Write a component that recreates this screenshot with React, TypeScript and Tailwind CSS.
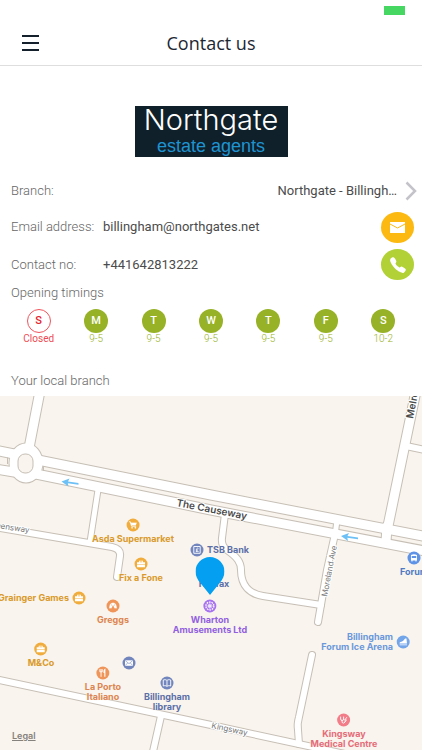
import type { ReactNode } from "react"
import { IoCall } from "react-icons/io5"

const MAP_WIDTH = 422
const MAP_HEIGHT = 354

const openingTimes = [
  { day: "S", hours: "Closed" },
  { day: "M", hours: "9-5" },
  { day: "T", hours: "9-5" },
  { day: "W", hours: "9-5" },
  { day: "T", hours: "9-5" },
  { day: "F", hours: "9-5" },
  { day: "S", hours: "10-2" },
]

const roads = [
  { d: "M40 -5 L29 52", width: 9 },
  { d: "M-5 54 L14 58", width: 9 },
  { d: "M-5 73 L14 76", width: 9 },
  { d: "M38 64 L211 99 L430 141.500", width: 9 },
  { d: "M36 78 L211 114 L430 156", width: 9 },
  { d: "M416 -5 L388 130", width: 9 },
  { d: "M387 130 L386 146", width: 9 },
  { d: "M337 124 L335 140", width: 5 },
  { d: "M406 50 L430 55", width: 6 },
  { d: "M335 138 L327 174 L318 226", width: 6 },
  { d: "M225 118 L222 142 Q221 150 227 154 C237 161 241 166 241 174 C241 190 250 198 263 200 L321 209", width: 6 },
  { d: "M312 259 L299 321 Q297 328 298 334 L299 348", width: 6 },
  { d: "M-5 283 L211 329 L345 358", width: 6 },
  { d: "M161 320 L152 360", width: 6 },
  { d: "M-5 131 L30 137 L112 151 Q121 153 120 160 L117 181", width: 6 },
  { d: "M98 94 L90 146", width: 5 },
]

type IconName = "cart" | "bag" | "bread" | "fork" | "mail" | "book" | "bank" | "wheel" | "skate" | "bus" | "medical"

const glyphs: Record<IconName, ReactNode> = {
  cart: (
    <g fill="white" stroke="white">
      <path d="M2.800 3.800h1.500l1.200 4.400h4.600" fill="none" strokeWidth=".9" />
      <path d="M4.600 4.800h6l-.9 2.400H5.200z" strokeWidth=".2" />
      <circle cx="6" cy="9.800" r=".7" strokeWidth=".2" />
      <circle cx="9.300" cy="9.800" r=".7" strokeWidth=".2" />
    </g>
  ),
  bag: <path d="M3 5.200h2V3.800h4v1.400h2v2.300H3zM5.800 5.200h2.400v-.7H5.800zM3 8h8v2.200H3z" fill="white" fillRule="evenodd" />,
  bread: <path d="M3 9.500c0-4 1.500-6 4-6s4 2 4 6H8.500L7 6.500l-1.500 3zM5 4.500l.8 2.500M9 4.500l-.8 2.500" fill="white" stroke="#f0955a" strokeWidth=".4" />,
  fork: (
    <g fill="none" stroke="white">
      <path d="M4 3.200v2.600h2.400V3.200M5.200 3v7.800" strokeWidth=".9" />
      <path d="M9 10.800V3.500C8 4.200 8 6 8.200 7" strokeWidth="1.100" />
    </g>
  ),
  mail: (
    <g>
      <path d="M3 4.300h8v5.500H3z" fill="white" />
      <path d="M3.200 4.500L7 7.700l3.800-3.200M3.200 9.600l2.500-2.700M10.800 9.600L8.300 6.900" fill="none" stroke="#7286bd" strokeWidth=".6" />
    </g>
  ),
  book: <path d="M7 4.500C6 3.500 4.500 3.500 3.300 4v6C4.500 9.500 6 9.500 7 10.400c1-.9 2.500-.9 3.700-.4V4C9.500 3.500 8 3.500 7 4.500v5.900" fill="none" stroke="white" strokeWidth=".9" />,
  bank: (
    <g fill="none" stroke="white" strokeWidth=".9">
      <path d="M3.800 3.500h6.400v6.800H3.800z" />
      <path d="M8.500 5.700c-.6-1-2-.6-1.800.6v1.200c0 .7-.3 1-.8 1.100h2.800M5.800 7h2.200" strokeWidth=".8" />
    </g>
  ),
  wheel: (
    <g fill="none" stroke="white" strokeWidth=".8">
      <circle cx="7" cy="7" r="4" strokeWidth="1.200" strokeDasharray="1.600 .9" />
      <circle cx="7" cy="7" r="1.300" />
      <path d="M7 3v8M3 7h8M4.200 4.200l5.600 5.600M9.800 4.200L4.200 9.800" strokeWidth=".5" />
    </g>
  ),
  skate: <path d="M9 3.500h1.300L10.800 8.500H3.300c0-1.500 1.500-1.500 3-2.200C7.500 5.700 8 4.700 9 3.500zM3.500 9.500h7.300v.8H3.500z" fill="white" />,
  bus: <path d="M4 4q3-1.300 6 0v5.500H9.500v1h-1v-1h-3v1h-1v-1H4zM4.800 5v2h4.400V5z" fill="white" fillRule="evenodd" />,
  medical: (
    <path
      d="M4 4v2q0 1.500 1.500 1.500T7 6V4M5.500 7.500v2Q7 11 8.500 9V6.500M10 4.500L8.500 6.500M8.500 8.500L10 7"
      fill="none"
      stroke="white"
      strokeWidth=".9"
      strokeLinecap="round"
    />
  ),
}

type Place = {
  x: number
  y: number
  icon: IconName
  side: "below" | "left" | "right"
  lines: string[]
  tone: string
  disc: string
}

const places: Place[] = [
  { x: 133, y: 129, icon: "cart", side: "below", lines: ["Asda Supermarket"], tone: "text-[#d99a2b]", disc: "text-[#f0ac3c]" },
  { x: 141, y: 168, icon: "bag", side: "below", lines: ["Fix a Fone"], tone: "text-[#d99a2b]", disc: "text-[#f0ac3c]" },
  { x: 79, y: 202, icon: "bag", side: "left", lines: ["Grainger Games"], tone: "text-[#d99a2b]", disc: "text-[#f0ac3c]" },
  { x: 113, y: 210, icon: "bread", side: "below", lines: ["Greggs"], tone: "text-[#dd8550]", disc: "text-[#f0955a]" },
  { x: 41, y: 253, icon: "bag", side: "below", lines: ["M&Co"], tone: "text-[#d99a2b]", disc: "text-[#f0ac3c]" },
  { x: 103, y: 277, icon: "fork", side: "below", lines: ["La Porto", "Italiano"], tone: "text-[#dd8550]", disc: "text-[#f0955a]" },
  { x: 129, y: 267, icon: "mail", side: "below", lines: [], tone: "text-[#5b6fa8]", disc: "text-[#7286bd]" },
  { x: 167, y: 287, icon: "book", side: "below", lines: ["Billingham", "library"], tone: "text-[#5b6fa8]", disc: "text-[#7286bd]" },
  { x: 197, y: 154, icon: "bank", side: "right", lines: ["TSB Bank"], tone: "text-[#5b6fa8]", disc: "text-[#7286bd]" },
  { x: 214, y: 174, icon: "bank", side: "below", lines: ["Halifax"], tone: "text-[#5b6fa8]", disc: "text-[#7286bd]" },
  { x: 210, y: 210, icon: "wheel", side: "below", lines: ["Wharton", "Amusements Ltd"], tone: "text-[#9160e0]", disc: "text-[#a873ee]" },
  { x: 403, y: 246, icon: "skate", side: "left", lines: ["Billingham", "Forum Ice Arena"], tone: "text-[#6a98dc]", disc: "text-[#72a5ea]" },
  { x: 414, y: 162, icon: "bus", side: "below", lines: ["Forum"], tone: "text-[#4f79c4]", disc: "text-[#5f93e6]" },
  { x: 344, y: 324, icon: "medical", side: "below", lines: ["Kingsway", "Medical Centre"], tone: "text-[#e56c79]", disc: "text-[#f27c87]" },
]

const sideClasses = {
  below: "flex-col items-center text-center -translate-x-1/2 -translate-y-[7px]",
  left: "flex-row-reverse items-center gap-[3px] text-right -translate-x-full -translate-y-1/2 ml-[7px]",
  right: "flex-row items-center gap-[3px] -translate-x-[7px] -translate-y-1/2",
}

function toPercent(value: number, total: number) {
  return `${(value / total) * 100}%`
}

function PlaceMarker({ place }: { place: Place }) {
  return (
    <div
      className={`absolute flex whitespace-nowrap text-[9px] font-bold leading-[10px] [text-shadow:0_0_2px_#f9f4ed,0_0_1px_#f9f4ed] ${sideClasses[place.side]} ${place.tone}`}
      style={{ left: toPercent(place.x, MAP_WIDTH), top: toPercent(place.y, MAP_HEIGHT) }}
    >
      <svg viewBox="0 0 14 14" className={`size-[14px] shrink-0 ${place.disc}`} aria-hidden="true">
        <circle cx="7" cy="7" r="6.500" fill="currentColor" />
        {glyphs[place.icon]}
      </svg>
      <div className={place.side === "below" ? "pt-[2px]" : ""}>
        {place.lines.map((line) => (
          <div key={line}>{line}</div>
        ))}
      </div>
    </div>
  )
}

function BranchMap() {
  return (
    <section aria-label="Map" className="relative aspect-[422/354] w-full overflow-hidden bg-[#f9f4ed] font-['Inter',sans-serif]">
      <svg viewBox={`0 0 ${MAP_WIDTH} ${MAP_HEIGHT}`} className="block size-full">
        <g fill="none" stroke="#c6bfb6" strokeLinecap="round" strokeLinejoin="round">
          {roads.map((road) => (
            <path key={road.d} d={road.d} strokeWidth={road.width + 2} />
          ))}
        </g>
        <ellipse cx="26" cy="67" rx="17.500" ry="20.500" fill="#c6bfb6" />
        <g fill="none" stroke="white" strokeLinecap="round" strokeLinejoin="round">
          {roads.map((road) => (
            <path key={road.d} d={road.d} strokeWidth={road.width} />
          ))}
        </g>
        <ellipse cx="26" cy="67" rx="16.500" ry="19.500" fill="white" />
        <rect x="18" y="58" width="15" height="19" rx="7" fill="#f9f4ed" stroke="#c6bfb6" />
        <path d="M7.500 61.500v6.500M43.500 70v5" fill="none" stroke="#c6bfb6" />

        <g fill="#6cc0f5">
          <path d="M61.500 85.500l8-3-1.500 3 10.500 1.500v1.800L67.800 87.300l.7 3.200z" />
          <path d="M341 140l8-3-1.500 3 10.500 1.500v1.800l-10.700-1.500.7 3.200z" />
        </g>

        <g stroke="white" strokeWidth="2" style={{ paintOrder: "stroke" }}>
          <text transform="translate(176 110) rotate(11)" fontSize="10" fontWeight="600" fill="#4a4a4a">The Causeway</text>
          <text transform="translate(413 23) rotate(-79)" fontSize="10" fontWeight="600" fill="#4a4a4a">Melrose Ave</text>
          <text transform="translate(-15 130) rotate(9)" fontSize="8" fill="#757575">Queensway</text>
          <text transform="translate(327 201) rotate(-79)" fontSize="8" fill="#757575">Moreland Ave</text>
          <text transform="translate(211 332) rotate(12)" fontSize="8" fill="#757575">Kingsway</text>
        </g>
      </svg>

      {places.map((place) => (
        <PlaceMarker key={`${place.x}-${place.y}`} place={place} />
      ))}

      {/* Selected branch */}
      <svg
        viewBox="0 0 29 38"
        className="absolute h-[38px] w-[29px] -translate-x-1/2 -translate-y-full"
        style={{ left: toPercent(210, MAP_WIDTH), top: toPercent(199, MAP_HEIGHT) }}
        aria-hidden="true"
      >
        <path d="M14.500 0C6.500 0 0 6.500 0 14.500c0 4.500 2 8 4.500 11L14.500 38l10-12.500c2.500-3 4.500-6.500 4.500-11C29 6.500 22.500 0 14.500 0z" fill="#049ff1" />
      </svg>

      <a href="#legal" className="absolute bottom-2 left-3 text-[9px] font-semibold leading-3 text-[#85817c] underline">
        Legal
      </a>
    </section>
  )
}

export default function App() {
  return (
    <main className="w-full bg-white font-['Roboto',sans-serif] text-[13px] text-[#4b4b4b]">
      <div className="flex h-5 items-center justify-end pr-[17px]">
        <div className="h-[9px] w-[21px] bg-[#45d761]" />
      </div>

      <header className="grid h-[46px] grid-cols-[60px_1fr_60px] items-center border-b border-[#dedede]">
        <button type="button" aria-label="Open menu" className="ml-[22px] flex w-[17px] flex-col gap-[5px]">
          <span className="h-[2px] w-full bg-[#14202b]" />
          <span className="h-[2px] w-full bg-[#14202b]" />
          <span className="h-[2px] w-full bg-[#14202b]" />
        </button>
        <h1 className="text-center font-['Open_Sans',sans-serif] text-[18px] leading-6 text-[#1c2733]">Contact us</h1>
      </header>

      <div className="flex justify-center pt-10">
        <div className="flex h-[51px] w-[153px] flex-col items-center bg-[#10202a]">
          <div className="font-['Inter',sans-serif] text-[29px] font-light leading-[28px] text-white">Northgate</div>
          <div className="font-['Liberation_Sans',Arial,sans-serif] text-[18px] leading-[25px] text-[#1e93d2]">estate agents</div>
        </div>
      </div>

      <div className="pt-4">
        <button type="button" className="flex h-[35px] w-full items-center pl-[11px] pr-[5px] text-left">
          <span className="flex-1 font-light text-[#666]">Branch:</span>
          <span>Northgate - Billingh…</span>
          <svg viewBox="0 0 12 20" className="ml-2 h-5 w-3" aria-hidden="true">
            <path d="M1.500 1.500L10 10l-8.500 8.500" fill="none" stroke="#c3c3c9" strokeWidth="2.500" />
          </svg>
        </button>

        <div className="flex h-[38px] items-center pl-[11px] pr-2">
          <span className="w-[92px] font-light text-[#666]">Email address:</span>
          <span className="flex-1">billingham@northgates.net</span>
          <button type="button" aria-label="Send email" className="flex h-[31px] w-[33px] items-center justify-center rounded-[50%] bg-[#fcb912]">
            <svg viewBox="0 0 15 11" className="h-[11px] w-[15px]" aria-hidden="true">
              <path d="M0 0h15v11H0z" fill="white" />
              <path d="M0 2l7.500 4L15 2" fill="none" stroke="#fcb912" />
            </svg>
          </button>
        </div>

        <div className="flex h-[37px] items-center pl-[11px] pr-2">
          <span className="w-[92px] font-light text-[#666]">Contact no:</span>
          <span className="flex-1">+441642813222</span>
          <button type="button" aria-label="Call branch" className="flex h-[31px] w-[33px] items-center justify-center rounded-[50%] bg-[#b1d136]">
            <IoCall className="size-[18px] text-white" aria-hidden="true" />
          </button>
        </div>
      </div>

      <section>
        <h2 className="pl-[11px] font-light leading-5 text-[#666]">Opening timings</h2>
        <ul className="grid grid-cols-7 px-[10px] pt-[6px]">
          {openingTimes.map(({ day, hours }, index) => {
            const closed = hours === "Closed"
            return (
              <li key={index} className="flex flex-col items-center">
                <span
                  className={`flex size-6 items-center justify-center rounded-full text-[11px] font-medium ${
                    closed ? "border border-[#f0545c] text-[#e6222c]" : "bg-[#97b226] text-white"
                  }`}
                >
                  {day}
                </span>
                <span className={`text-[10px] leading-3 ${closed ? "text-[#ee4b54]" : "font-light text-[#97b226]"}`}>{hours}</span>
              </li>
            )
          })}
        </ul>
      </section>

      <h2 className="pb-[5px] pl-[11px] pt-[26px] font-light leading-5 text-[#666]">Your local branch</h2>
      <BranchMap />
    </main>
  )
}
